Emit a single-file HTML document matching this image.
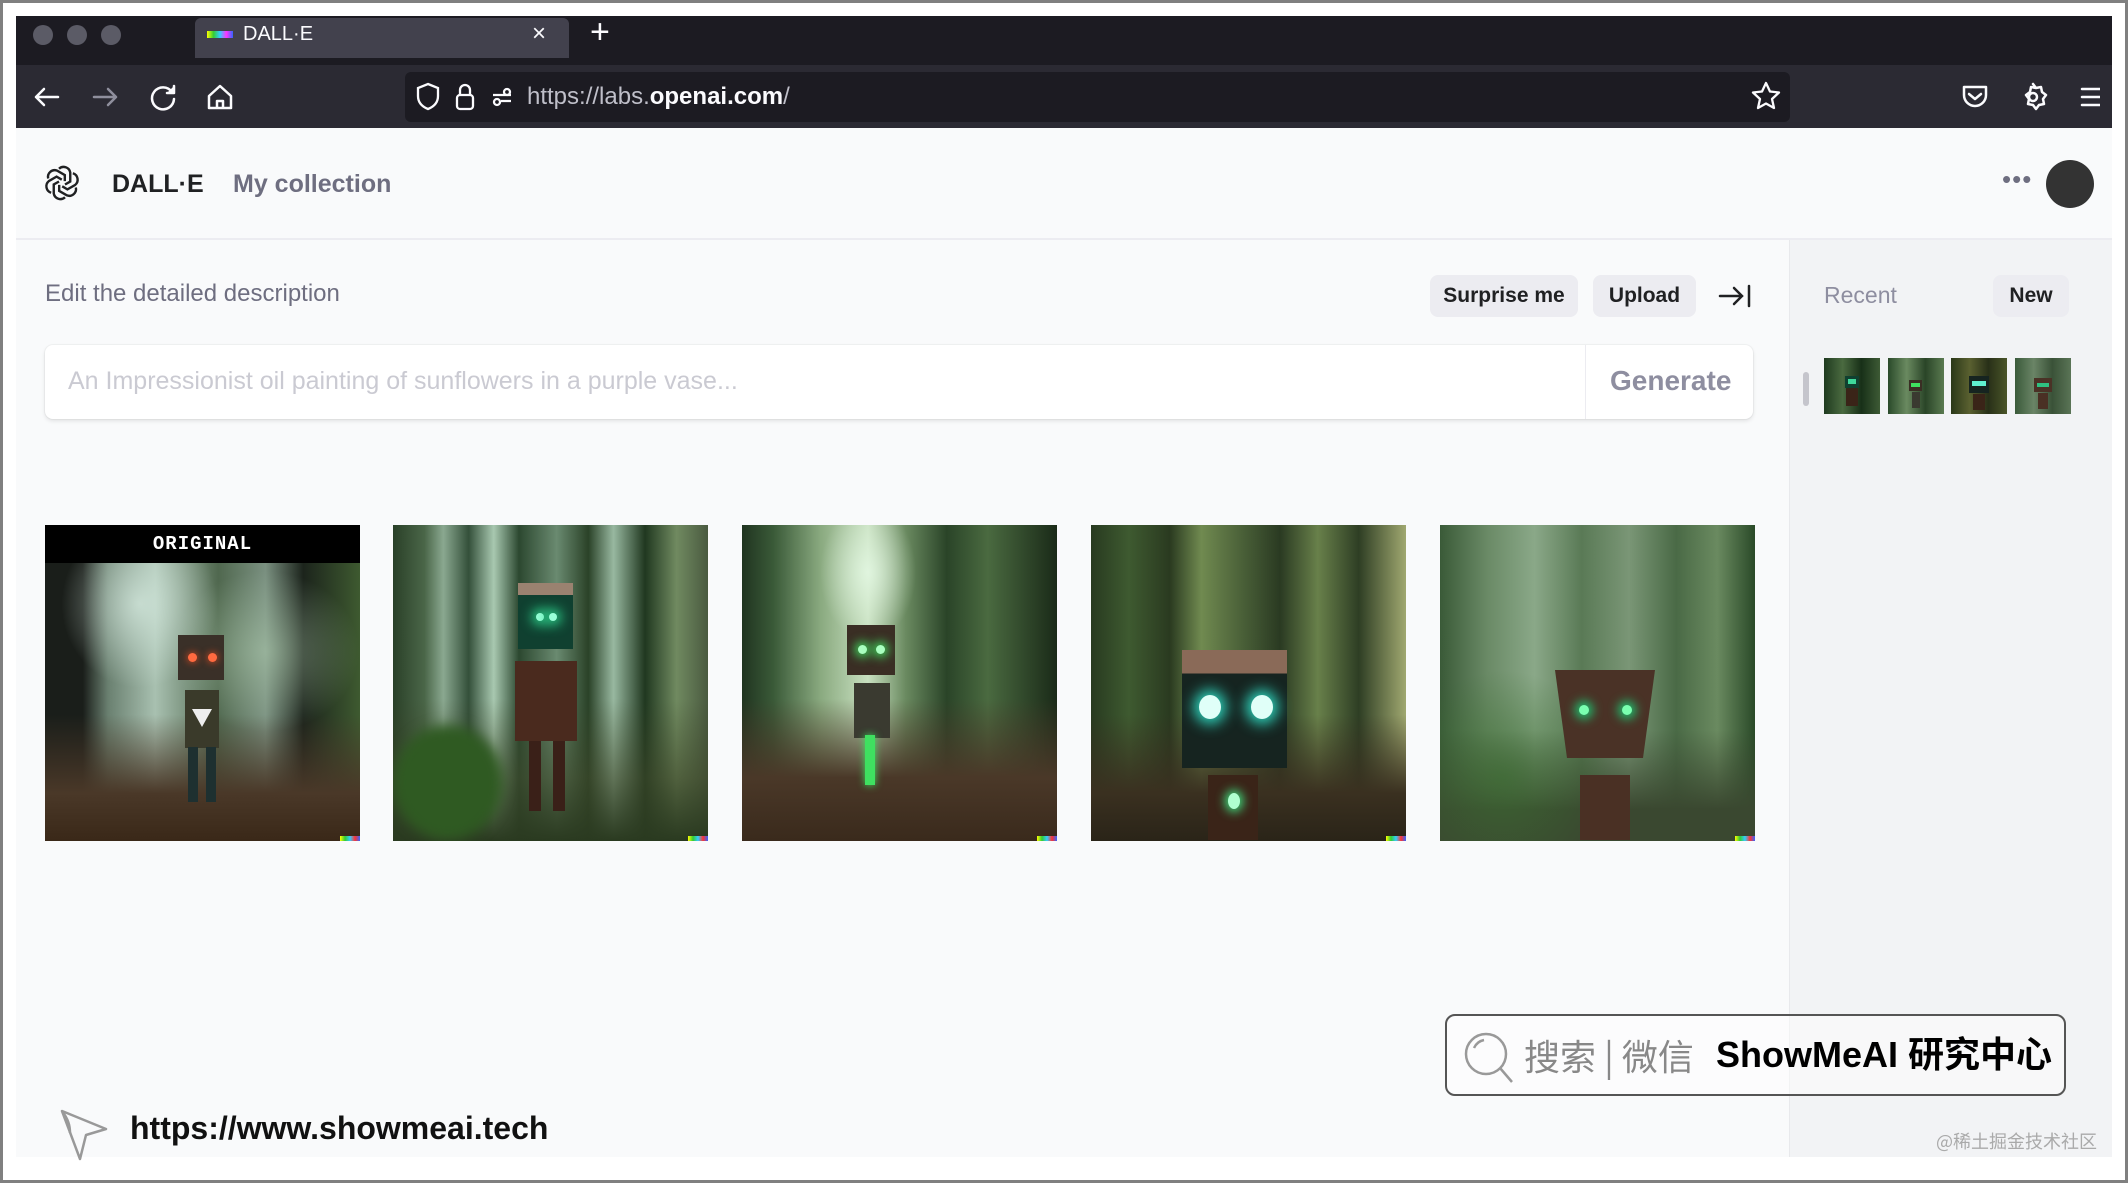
<!DOCTYPE html>
<html><head><meta charset="utf-8"><style>
*{box-sizing:border-box;margin:0;padding:0}
body{width:2128px;height:1183px;background:#fff;position:relative;overflow:hidden;font-family:"Liberation Sans","Noto Sans CJK SC",sans-serif}
.frame{position:absolute;left:0;top:0;width:2128px;height:1183px;border:3px solid #808080;pointer-events:none;z-index:9}
.abs{position:absolute}
.chrome{left:16px;top:16px;width:2096px;height:112px;background:#2b2a33}
.tabbar{left:16px;top:16px;width:2096px;height:49px;background:#1c1b22}
.tab{left:195px;top:18px;width:374px;height:40px;background:#42414d;border-radius:6px 6px 0 0}
.dot{width:20px;height:20px;border-radius:50%;background:#5b5b66;top:25px}
.url{left:405px;top:72px;width:1385px;height:50px;background:#1c1b22;border-radius:6px}
.page{left:16px;top:128px;width:2096px;height:1029px;background:#f9fafb}
.side{left:1789px;top:240px;width:323px;height:917px;background:#f2f3f5;border-left:1px solid #e8e9ec}
.btn{background:#ececf1;border-radius:8px;font-weight:bold;font-size:21px;color:#202123;display:flex;align-items:center;justify-content:center}
.img{top:525px;width:315px;height:316px;overflow:hidden}
.img .sig{position:absolute;right:0;bottom:0;width:20px;height:5px;background:linear-gradient(90deg,#ff0,#3c3,#3cf,#f33,#36f)}
.r{position:absolute}
.th{position:absolute;top:358px;width:56px;height:56px;overflow:hidden}
</style></head><body>
<div class="frame"></div>
<div class="abs chrome"></div>
<div class="abs tabbar"></div>
<div class="abs dot" style="left:33px"></div><div class="abs dot" style="left:67px"></div><div class="abs dot" style="left:101px"></div>
<div class="abs tab"></div>
<div class="abs" style="left:207px;top:31px;width:26px;height:7px;background:linear-gradient(90deg,#ff0,#3c3,#3cf,#f3f,#36f)"></div>
<div class="abs" style="left:243px;top:18px;color:#fbfbfe;font-size:20px;line-height:32px">DALL·E</div>
<div class="abs" style="left:532px;top:18px;color:#fbfbfe;font-size:24px;line-height:32px">×</div>
<div class="abs" style="left:590px;top:14px;color:#fbfbfe;font-size:34px;line-height:36px;font-weight:300">+</div>
<svg class="abs" style="left:32px;top:82px" width="30" height="30" fill="none" stroke="#fbfbfe" stroke-width="2.5" stroke-linecap="round" stroke-linejoin="round"><path d="M26 15H4M12 7l-8 8 8 8"/></svg>
<svg class="abs" style="left:90px;top:82px" width="30" height="30" fill="none" stroke="#8f8f9d" stroke-width="2.5" stroke-linecap="round" stroke-linejoin="round"><path d="M4 15h22M18 7l8 8-8 8"/></svg>
<svg class="abs" style="left:148px;top:82px" width="30" height="30" fill="none" stroke="#fbfbfe" stroke-width="2.5" stroke-linecap="round" stroke-linejoin="round"><path d="M24 10a11 11 0 1 0 2 7"/><path d="M26 4v7h-7" fill="#fbfbfe"/></svg>
<svg class="abs" style="left:205px;top:82px" width="30" height="30" fill="none" stroke="#fbfbfe" stroke-width="2.5" stroke-linejoin="round"><path d="M4 14L15 4l11 10v12H4zM12 26v-7h6v7"/></svg>
<div class="abs url"></div>
<svg class="abs" style="left:413px;top:80px" width="110" height="34" fill="none" stroke="#fbfbfe" stroke-width="2.3"><path d="M15 4l10 4v8c0 7-5 11-10 13C10 27 5 23 5 16V8z"/><rect x="44" y="15" width="16" height="14" rx="3"/><path d="M47 15v-5a5 5 0 0 1 10 0v5"/><path d="M80 15h18M88 21h10"/><circle cx="94" cy="12" r="3"/><circle cx="84" cy="22" r="3"/></svg>
<div class="abs" style="left:527px;top:80px;font-size:24px;line-height:34px;color:#bfbfc9">https://labs.<span style="color:#fbfbfe;font-weight:bold">openai.com</span>/</div>
<svg class="abs" style="left:1750px;top:80px" width="32" height="32" fill="none" stroke="#fbfbfe" stroke-width="2.3" stroke-linejoin="round"><path d="M16 3l4 8.5 9 1-7 6.5 2 9-8-4.5-8 4.5 2-9-7-6.5 9-1z"/></svg>
<svg class="abs" style="left:1960px;top:80px" width="140" height="34" fill="none" stroke="#fbfbfe" stroke-width="2.5" stroke-linecap="round" stroke-linejoin="round"><path d="M4 7h22v8a11 11 0 0 1-22 0zM9 14l6 5 6-5"/><circle cx="73" cy="17" r="4"/><path d="M73 4l3 4 5-1 1 5 4 3-3 4 1 5-5 1-3 4-3-4-5-1 1-5-3-4 4-3 1-5 5 1z"/><path d="M122 9h18M122 17h18M122 25h18"/></svg>
<div class="abs page"></div>
<div class="abs" style="left:16px;top:238px;width:2096px;height:2px;background:#ececf1"></div>
<svg class="abs" style="left:44px;top:165px" width="36" height="36" viewBox="0 0 24 24" fill="none" stroke="#202123" stroke-width="1.6"><g transform="translate(12 12)"><path id="p" d="M-2 -9.5a4.5 4.5 0 0 1 7.5 2.5v6l-3.5 2"/><use href="#p" transform="rotate(60)"/><use href="#p" transform="rotate(120)"/><use href="#p" transform="rotate(180)"/><use href="#p" transform="rotate(240)"/><use href="#p" transform="rotate(300)"/></g></svg>
<div class="abs" style="left:112px;top:167px;font-size:25px;font-weight:bold;color:#202123;line-height:34px">DALL·E</div>
<div class="abs" style="left:233px;top:167px;font-size:25px;font-weight:bold;color:#6e6e80;line-height:34px">My collection</div>
<div class="abs" style="left:2002px;top:164px;font-size:26px;color:#6e6e80;letter-spacing:1px">•••</div>
<div class="abs" style="left:2046px;top:160px;width:48px;height:48px;border-radius:50%;background:#333"></div>
<div class="abs side"></div>
<div class="abs" style="left:45px;top:279px;font-size:24px;color:#6e6e80;line-height:30px">Edit the detailed description</div>
<div class="abs btn" style="left:1430px;top:275px;width:148px;height:42px">Surprise me</div>
<div class="abs btn" style="left:1593px;top:275px;width:103px;height:42px">Upload</div>
<svg class="abs" style="left:1718px;top:282px" width="34" height="28" fill="none" stroke="#202123" stroke-width="2.5" stroke-linecap="round"><path d="M2 14h22M16 6l8 8-8 8M31 4v20"/></svg>
<div class="abs" style="left:45px;top:345px;width:1708px;height:74px;background:#fff;border-radius:8px;box-shadow:0 2px 4px rgba(0,0,0,.1),0 0 0 1px rgba(0,0,0,.03)"></div>
<div class="abs" style="left:1585px;top:345px;width:1px;height:74px;background:#ececf1"></div>
<div class="abs" style="left:68px;top:364px;font-size:25px;color:#cacad2;line-height:34px">An Impressionist oil painting of sunflowers in a purple vase...</div>
<div class="abs" style="left:1610px;top:363px;font-size:28px;font-weight:bold;color:#8e8ea0;line-height:36px">Generate</div>
<div class="abs" style="left:1824px;top:280px;font-size:23px;color:#8e8ea0;line-height:30px">Recent</div>
<div class="abs btn" style="left:1993px;top:275px;width:76px;height:42px">New</div>
<div class="abs" style="left:1803px;top:372px;width:6px;height:34px;border-radius:3px;background:#c5c5cc"></div>
<div class="th" style="left:1824px;background:linear-gradient(90deg,#1f3a1f,#4a6a40,#183018,#3d5a35)"><div class="r" style="left:21px;top:18px;width:14px;height:12px;background:#104030"></div><div class="r" style="left:24px;top:21px;width:8px;height:5px;background:#3fd89a"></div><div class="r" style="left:22px;top:30px;width:12px;height:18px;background:#3a2418"></div></div>
<div class="th" style="left:1888px;background:linear-gradient(90deg,#2a4a2a,#6a8a60,#2a4528,#5a7a50)"><div class="r" style="left:21px;top:22px;width:13px;height:11px;background:#3a2e24"></div><div class="r" style="left:23px;top:25px;width:9px;height:4px;background:#3fe060"></div><div class="r" style="left:24px;top:34px;width:8px;height:16px;background:#3a3a30"></div></div>
<div class="th" style="left:1951px;background:linear-gradient(90deg,#2a3818,#5a6030,#283018,#4a5528)"><div class="r" style="left:18px;top:18px;width:20px;height:17px;background:#162420"></div><div class="r" style="left:21px;top:23px;width:14px;height:5px;background:#5ff0d0"></div><div class="r" style="left:22px;top:36px;width:12px;height:16px;background:#3a2418"></div></div>
<div class="th" style="left:2015px;background:linear-gradient(90deg,#3a5a3a,#6a8466,#3a5238,#5a7456)"><div class="r" style="left:19px;top:20px;width:18px;height:14px;background:#4a3226"></div><div class="r" style="left:22px;top:25px;width:12px;height:4px;background:#2fc080"></div><div class="r" style="left:23px;top:35px;width:10px;height:16px;background:#4a3024"></div></div>

<div class="abs img" style="left:45px;background:radial-gradient(ellipse at 30% 25%,rgba(220,240,230,.7) 0,transparent 25%),radial-gradient(ellipse at 70% 40%,rgba(180,210,180,.5) 0,transparent 30%),linear-gradient(180deg,transparent 60%,#4a3828 85%,#3a2818),linear-gradient(90deg,#1a1e1a 0,#1a1e1a 12%,#6a8070 20%,#a8c0b0 35%,#50684f 55%,#7a9080 70%,#1c241c 82%,#3e5a30)">
<div class="r" style="left:0;top:0;width:315px;height:38px;background:#000;color:#fff;font-family:'Liberation Mono',monospace;font-weight:bold;font-size:19px;text-align:center;line-height:38px;letter-spacing:1px">ORIGINAL</div>
<div class="r" style="left:133px;top:110px;width:46px;height:45px;background:#3a3028"></div>
<div class="r" style="left:143px;top:128px;width:9px;height:9px;border-radius:50%;background:#ff6a40;box-shadow:0 0 8px #ff5020"></div>
<div class="r" style="left:163px;top:128px;width:9px;height:9px;border-radius:50%;background:#ff6a40;box-shadow:0 0 8px #ff5020"></div>
<div class="r" style="left:140px;top:165px;width:34px;height:58px;background:#3a3a2a"></div>
<div class="r" style="left:147px;top:184px;width:0;height:0;border-left:10px solid transparent;border-right:10px solid transparent;border-top:18px solid #eee"></div>
<div class="r" style="left:143px;top:222px;width:10px;height:55px;background:#1e3030"></div><div class="r" style="left:161px;top:222px;width:10px;height:55px;background:#1e3030"></div>
<div class="sig"></div></div>

<div class="abs img" style="left:393px;background:linear-gradient(180deg,transparent 55%,rgba(60,70,40,.6) 80%,#2a3a20),linear-gradient(90deg,#2a4028 0,#4a6648 10%,#8aa890 16%,#34503a 24%,#a8c8b0 32%,#2c4830 40%,#6a8a70 52%,#2a4228 62%,#98b8a0 70%,#203820 80%,#708a60 90%,#4a5a40)">
<div class="r" style="left:0;top:200px;width:110px;height:115px;border-radius:50%;background:#2f5a22;filter:blur(6px)"></div>
<div class="r" style="left:125px;top:58px;width:55px;height:66px;background:linear-gradient(#9a8270 0 18%,#104030 18%)"></div>
<div class="r" style="left:143px;top:88px;width:8px;height:8px;border-radius:50%;background:#9affd8;box-shadow:0 0 12px 4px #2fd890"></div><div class="r" style="left:156px;top:88px;width:8px;height:8px;border-radius:50%;background:#9affd8;box-shadow:0 0 12px 4px #2fd890"></div>
<div class="r" style="left:122px;top:136px;width:62px;height:80px;background:#4a2a1e"></div>
<div class="r" style="left:136px;top:216px;width:12px;height:70px;background:#3a2018"></div><div class="r" style="left:160px;top:216px;width:12px;height:70px;background:#3a2018"></div>
<div class="sig"></div></div>

<div class="abs img" style="left:742px;background:radial-gradient(ellipse at 40% 15%,rgba(230,250,230,.8) 0,transparent 18%),linear-gradient(180deg,transparent 55%,#4a3828 80%,#3a2a1c),linear-gradient(90deg,#203420 0,#3a5a38 10%,#8aaa80 25%,#c8e0c0 40%,#6a8a60 52%,#2a4428 65%,#4a6a40 78%,#1a2a18)">
<div class="r" style="left:105px;top:100px;width:48px;height:50px;background:#3a2e24"></div>
<div class="r" style="left:116px;top:120px;width:9px;height:9px;border-radius:50%;background:#aaffc0;box-shadow:0 0 10px 3px #3fe060"></div><div class="r" style="left:134px;top:120px;width:9px;height:9px;border-radius:50%;background:#aaffc0;box-shadow:0 0 10px 3px #3fe060"></div>
<div class="r" style="left:112px;top:158px;width:36px;height:55px;background:#3a3a30"></div>
<div class="r" style="left:123px;top:210px;width:10px;height:50px;background:#3fe060;box-shadow:0 0 8px #3fe060"></div>
<div class="sig"></div></div>

<div class="abs img" style="left:1091px;background:linear-gradient(180deg,transparent 60%,#3a3020 85%,#2a2418),linear-gradient(90deg,#283a20 0,#3e5a30 12%,#2a3a20 25%,#708a50 35%,#4a6038 48%,#2a3a22 60%,#68804a 72%,#2e3e24 85%,#a0a870)">
<div class="r" style="left:91px;top:125px;width:105px;height:118px;background:linear-gradient(#8a6a58 0 20%,#162420 20%)"></div>
<div class="r" style="left:108px;top:170px;width:22px;height:24px;border-radius:50%;background:#e0fff8;box-shadow:0 0 14px 5px #2fd8c0"></div><div class="r" style="left:160px;top:170px;width:22px;height:24px;border-radius:50%;background:#e0fff8;box-shadow:0 0 14px 5px #2fd8c0"></div>
<div class="r" style="left:117px;top:250px;width:50px;height:65px;background:#3a2418"></div>
<div class="r" style="left:137px;top:268px;width:12px;height:16px;border-radius:50%;background:#b0ffd0;box-shadow:0 0 10px 3px #3fe080"></div>
<div class="sig"></div></div>

<div class="abs img" style="left:1440px;background:radial-gradient(ellipse at 20% 80%,rgba(60,110,50,.7) 0,transparent 30%),linear-gradient(180deg,transparent 65%,#3a4830 90%),linear-gradient(90deg,#3a5a38 0,#6a8a66 15%,#8aa888 30%,#5a7a56 45%,#7a9676 60%,#4a6a46 75%,#6a8a60 88%,#2a4a28)">
<div class="r" style="left:115px;top:145px;width:100px;height:88px;background:#4a3226;clip-path:polygon(0 0,100% 0,88% 100%,12% 100%)"></div>
<div class="r" style="left:139px;top:180px;width:10px;height:10px;border-radius:50%;background:#7affb0;box-shadow:0 0 10px 4px #1fc070"></div><div class="r" style="left:182px;top:180px;width:10px;height:10px;border-radius:50%;background:#7affb0;box-shadow:0 0 10px 4px #1fc070"></div>
<div class="r" style="left:140px;top:250px;width:50px;height:65px;background:#4a3024"></div>
<div class="sig"></div></div>

<div class="abs" style="left:1445px;top:1014px;width:621px;height:82px;border:2px solid #555;border-radius:10px;background:rgba(255,255,255,.45)"></div>
<svg class="abs" style="left:1462px;top:1030px" width="56" height="56" fill="none" stroke="#999" stroke-width="2.5"><circle cx="24" cy="24" r="20"/><path d="M38 38l12 14M12 18a14 14 0 0 1 10-8"/></svg>
<div class="abs" style="left:1524px;top:1031px;font-size:36px;color:#888;line-height:48px;font-family:'Noto Sans CJK SC',sans-serif">搜索 | 微信</div>
<div class="abs" style="left:1716px;top:1031px;font-size:36px;color:#000;font-weight:bold;line-height:48px;font-family:'Liberation Sans','Noto Sans CJK SC',sans-serif">ShowMeAI 研究中心</div>
<svg class="abs" style="left:56px;top:1105px" width="56" height="58" fill="none" stroke="#999" stroke-width="2.5" stroke-linejoin="round"><path d="M6 6l44 18-20 6-6 24z"/><path d="M6 6c6 8 8 14 8 22"/></svg>
<div class="abs" style="left:130px;top:1107px;font-size:32px;font-weight:bold;color:#111;line-height:42px">https://www.showmeai.tech</div>
<div class="abs" style="left:1936px;top:1128px;font-size:18px;color:#aaa;font-family:'Noto Sans CJK SC',sans-serif">@稀土掘金技术社区</div>
</body></html>
